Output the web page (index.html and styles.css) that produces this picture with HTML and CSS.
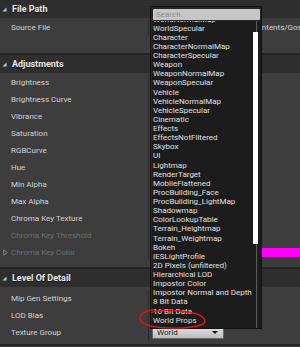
FILE: index.html
```html
<!DOCTYPE html>
<html lang="en">
<head>
<meta charset="UTF-8">
<meta name="viewport" content="width=device-width, initial-scale=1.0">
<title>Texture Details</title>
<link rel="stylesheet" href="styles.css">
</head>
<body>
    <div class="details">
        <!-- File Path -->
        <section class="category">
            <div class="cat-head"><svg class="arrow" width="5" height="5" viewBox="0 0 5 5"><polygon points="4.5,0.5 4.5,4.5 0.5,4.5"/></svg>File Path</div>
            <div class="row"><div class="name">Source File</div><div class="value"><span class="path">D:/Work/Gossamer/Source/Contents/Gossamer/T_Gossamer_D.tga</span></div></div>
            <div class="cat-pad tall"></div>
        </section>

        <!-- Adjustments -->
        <section class="category">
            <div class="cat-head"><svg class="arrow" width="5" height="5" viewBox="0 0 5 5"><polygon points="4.5,0.5 4.5,4.5 0.5,4.5"/></svg>Adjustments</div>
            <div class="row"><div class="name">Brightness</div><div class="value"></div></div>
            <div class="row"><div class="name">Brightness Curve</div><div class="value"></div></div>
            <div class="row"><div class="name">Vibrance</div><div class="value"></div></div>
            <div class="row"><div class="name">Saturation</div><div class="value"></div></div>
            <div class="row"><div class="name">RGBCurve</div><div class="value"></div></div>
            <div class="row"><div class="name">Hue</div><div class="value"></div></div>
            <div class="row"><div class="name">Min Alpha</div><div class="value"></div></div>
            <div class="row"><div class="name">Max Alpha</div><div class="value"></div></div>
            <div class="row"><div class="name">Chroma Key Texture</div><div class="value"></div></div>
            <div class="row disabled"><div class="name">Chroma Key Threshold</div><div class="value"></div></div>
            <div class="row disabled"><div class="name"><svg class="expander" width="5" height="7" viewBox="0 0 5 7"><polygon points="0.7,0.7 4.3,3.5 0.7,6.3"/></svg>Chroma Key Color</div><div class="value"><div class="swatch"></div></div></div>
            <div class="cat-pad"></div>
        </section>

        <!-- Level Of Detail -->
        <section class="category">
            <div class="cat-head"><svg class="arrow" width="5" height="5" viewBox="0 0 5 5"><polygon points="4.5,0.5 4.5,4.5 0.5,4.5"/></svg>Level Of Detail</div>
            <div class="rows-lod">
                <div class="row"><div class="name">Mip Gen Settings</div><div class="value"></div></div>
                <div class="row"><div class="name">LOD Bias</div><div class="value"></div></div>
                <div class="row"><div class="name">Texture Group</div><div class="value"><div class="combo">World<span class="combo-arrow"></span></div></div></div>
            </div>
        </section>
    </div>

    <!-- Texture group picker, open above the combo -->
    <div class="picker">
        <div class="search">Search</div>
        <div class="list">
            <ul>
                <li>WorldNormalMap</li>
                <li>WorldSpecular</li>
                <li>Character</li>
                <li>CharacterNormalMap</li>
                <li>CharacterSpecular</li>
                <li>Weapon</li>
                <li>WeaponNormalMap</li>
                <li>WeaponSpecular</li>
                <li>Vehicle</li>
                <li>VehicleNormalMap</li>
                <li>VehicleSpecular</li>
                <li>Cinematic</li>
                <li>Effects</li>
                <li>EffectsNotFiltered</li>
                <li>Skybox</li>
                <li>UI</li>
                <li>Lightmap</li>
                <li>RenderTarget</li>
                <li>MobileFlattened</li>
                <li>ProcBuilding_Face</li>
                <li>ProcBuilding_LightMap</li>
                <li>Shadowmap</li>
                <li>ColorLookupTable</li>
                <li>Terrain_Heightmap</li>
                <li>Terrain_Weightmap</li>
                <li>Bokeh</li>
                <li>IESLightProfile</li>
                <li>2D Pixels (unfiltered)</li>
                <li>Hierarchical LOD</li>
                <li>Impostor Color</li>
                <li>Impostor Normal and Depth</li>
                <li>8 Bit Data</li>
                <li>16 Bit Data</li>
                <li>World Props</li>
            </ul>
            <div class="track"></div>
            <div class="thumb"></div>
        </div>
    </div>

    <!-- hand drawn markup -->
    <svg class="markup" width="300" height="347" viewBox="0 0 300 347">
        <path d="M154,309.5 C147,310.5 140,313.5 140,317.5 C140,322 146,326 160,327.5 C174,328.5 192,328 201,325 C206,323 206,319.5 202,316.5 C197,313 184,311 168,310.5 C160,310.3 155,311 151,312.5"/>
    </svg>
</body>
</html>
```

FILE: styles.css
```css
body {
margin: 0;
width: 300px;
height: 347px;
overflow: hidden;
background-color: #3d3d3d;
font-family: Roboto, "Open Sans", sans-serif;
font-size: 8px;
color: #d2d2d2;
position: relative;
}

.category {
border-bottom: 2px solid #242424;
}

.cat-head {
height: 18px;
line-height: 18px;
margin-bottom: 1px;
background-color: #2e2e2e;
font-size: 9px;
font-weight: bold;
color: #e8e8e8;
text-shadow: 0 1px 0 #151515;
display: flex;
align-items: center;
}

.arrow {
fill: #c8c8c8;
margin: 1px 5px 0 2px;
}

.cat-pad {
height: 6px;
}

.cat-pad.tall {
height: 17px;
}

.rows-lod {
padding-top: 2px;
padding-bottom: 3px;
}

.row {
display: flex;
height: 17px;
line-height: 17px;
}

.name {
width: 137px;
padding-left: 11px;
border-right: 1px solid #2c2c2c;
white-space: nowrap;
display: flex;
align-items: center;
}

.value {
flex: 1;
padding-left: 3px;
overflow: hidden;
white-space: nowrap;
display: flex;
align-items: center;
}

.disabled .name {
color: #707070;
}

.expander {
fill: none;
stroke: #8a8a8a;
stroke-width: 0.9;
margin-left: -8px;
margin-right: 3px;
}

.swatch {
width: 100%;
height: 9px;
background-color: #ff00ff;
}

.combo {
position: relative;
width: 66px;
height: 11px;
line-height: 11px;
padding-left: 4px;
border: 1px solid #6a6a6a;
border-radius: 1px;
background: linear-gradient(#e2e2e2, #bcbcbc);
color: #151515;
}

.combo-arrow {
position: absolute;
right: 5px;
top: 4px;
border-left: 3px solid transparent;
border-right: 3px solid transparent;
border-top: 3px solid #111;
}

.picker {
position: absolute;
left: 150px;
top: 6px;
width: 109px;
height: 319px;
padding: 2px 0 0 1px;
background-color: #262626;
border: 1px solid #121212;
display: flex;
flex-direction: column;
}

.search {
height: 11px;
line-height: 11px;
width: 104px;
margin-left: 1px;
padding-left: 3px;
background-color: #c6c6c6;
border-radius: 1px;
color: #8e8e8e;
}

.list {
position: relative;
flex: 1;
margin-top: 1px;
overflow: hidden;
background-color: #1c1c1c;
}

.list ul {
list-style: none;
margin: -6.4px 0 0 0;
padding: 0 0 0 1px;
}

.list li {
line-height: 9.14px;
height: 9.14px;
color: #e0e0e0;
white-space: nowrap;
}

.track {
position: absolute;
left: 104px;
top: 0;
bottom: 0;
width: 1px;
background-color: #5c5c5c;
}

.thumb {
position: absolute;
left: 101px;
top: 11px;
width: 5px;
height: 212px;
background-color: #ffffff;
}

.markup {
position: absolute;
left: 0;
top: 0;
pointer-events: none;
fill: none;
stroke: #e3141c;
stroke-width: 1.4;
}
```
